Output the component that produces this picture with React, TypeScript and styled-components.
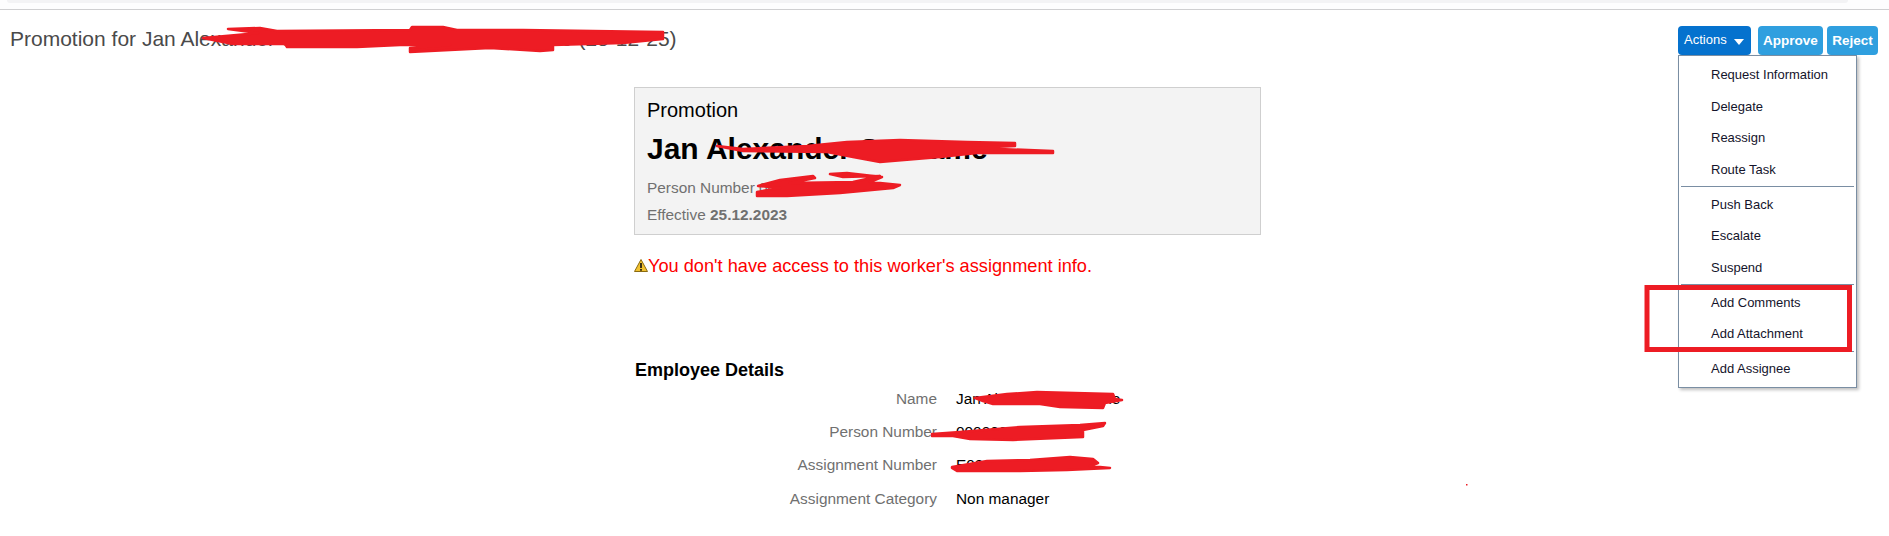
import React from "react";
import styled, { createGlobalStyle } from "styled-components";

const GlobalStyle = createGlobalStyle`
  html, body {
    margin: 0;
    padding: 0;
    background: #fff;
    overflow: hidden;
  }
  body {
    font-family: "Liberation Sans", Arial, sans-serif;
  }
`;

const Page = styled.div`
  position: relative;
  width: 1889px;
  height: 536px;
  overflow: hidden;
`;

const TopStrip = styled.div`
  height: 9px;
  padding: 0 41px 0 7px;
  background: #fdfdfe;
  border-bottom: 1px solid #cfcfd1;
`;

const TopStripInner = styled.div`
  height: 3px;
  background: #f3f3f5;
  border-radius: 0 0 4px 4px;
`;

const Header = styled.div`
  display: flex;
  justify-content: space-between;
  align-items: flex-start;
  padding: 16px 11px 0 10px;
  height: 29px;
`;

const PageTitle = styled.h1`
  margin: 0;
  font-size: 21px;
  font-weight: 400;
  line-height: 26px;
  color: #4a4a4a;
  white-space: nowrap;
`;

const ButtonBar = styled.div`
  position: relative;
  display: flex;
  width: 200px;
`;

const ActionsButton = styled.button`
  display: flex;
  align-items: center;
  width: 73px;
  height: 29px;
  margin-right: 7px;
  padding: 0 0 3px 6px;
  border: none;
  border-radius: 4px;
  background: #0572ce;
  color: #fff;
  font: 400 13px "Liberation Sans", Arial, sans-serif;
`;

const Caret = styled.span`
  width: 0;
  height: 0;
  margin: 5px 0 0 7px;
  border-left: 5px solid transparent;
  border-right: 5px solid transparent;
  border-top: 6px solid #fff;
`;

const FlatButton = styled.button<{ $width: number; $gap?: number }>`
  width: ${(p) => p.$width}px;
  height: 29px;
  margin-right: ${(p) => p.$gap ?? 0}px;
  padding: 0;
  border: none;
  border-radius: 4px;
  background: #2f9fdf;
  color: #fff;
  font: 700 13.5px "Liberation Sans", Arial, sans-serif;
`;

const Menu = styled.div`
  position: absolute;
  top: 29px;
  left: 0;
  box-sizing: border-box;
  width: 179px;
  height: 333px;
  padding: 3px 2px 0;
  background: #fff;
  border: 1px solid #7a8ea3;
  box-shadow: 2px 2px 3px rgba(0, 0, 0, 0.25);
`;

const MenuItem = styled.div`
  height: 31.5px;
  padding-left: 30px;
  font-size: 13px;
  line-height: 31.5px;
  color: #14142b;
  white-space: nowrap;
`;

const MenuSeparator = styled.div`
  height: 1px;
  margin: 1px 0 1.5px;
  background: #7a8ea3;
`;

const Main = styled.main`
  width: 627px;
  margin-left: 634px;
  padding-top: 32px;
`;

const SummaryCard = styled.section`
  box-sizing: border-box;
  height: 148px;
  padding: 7px 12px 0;
  background: #f3f3f3;
  border: 1px solid #cfcfcf;
`;

const CardType = styled.div`
  font-size: 20px;
  line-height: 30px;
  color: #000;
`;

const CardName = styled.div`
  margin-top: 4px;
  margin-bottom: 7px;
  font-size: 30px;
  font-weight: 700;
  line-height: 40px;
  color: #000;
  white-space: nowrap;
`;

const CardMeta = styled.div`
  margin-bottom: 3px;
  font-size: 15.4px;
  line-height: 24px;
  color: #707070;
  white-space: nowrap;
`;

const Warning = styled.div`
  display: flex;
  align-items: center;
  margin-top: 19px;
  font-size: 18.2px;
  line-height: 24px;
  color: #fd0000;
`;

const WarningIcon = styled.svg`
  width: 14px;
  height: 15px;
  margin-bottom: 2px;
  flex: none;
`;

const SectionHeading = styled.h2`
  margin: 80px 0 0 1px;
  font-size: 18px;
  font-weight: 700;
  line-height: 24px;
  color: #000;
`;

const DetailGrid = styled.dl`
  display: grid;
  grid-template-columns: 303px 1fr;
  grid-auto-rows: 33.3px;
  column-gap: 19px;
  margin: 0;
  font-size: 15.4px;
  align-items: center;
`;

const DetailLabel = styled.dt`
  text-align: right;
  color: #707070;
`;

const DetailValue = styled.dd`
  margin: 0;
  color: #000;
`;

const Annotations = styled.svg`
  position: absolute;
  top: 0;
  left: 0;
  pointer-events: none;
`;

const menuGroups = [
  ["Request Information", "Delegate", "Reassign", "Route Task"],
  ["Push Back", "Escalate", "Suspend"],
  ["Add Comments", "Add Attachment"],
  ["Add Assignee"],
];

const details = [
  ["Name", "Jan Alexander Surname"],
  ["Person Number", "00000000000000"],
  ["Assignment Number", "E00000000000000"],
  ["Assignment Category", "Non manager"],
];

const scribbles = [
  "M203 38 258 33 228 29 260 28 277 31 410 30 412 27 443 27 457 30 523 30 663 32 663 39 623 43 553 45 553 50 540 51 490 48 410 52 410 48 450 45 400 45 357 47 287 47 285 44 233 44Z",
  "M717 146 743 149 807 146 847 142 900 140 967 142 1015 143 1015 146 973 148 1053 151 1053 153 977 153 940 157 880 162 853 157 827 152 743 151Z",
  "M758 186 780 180 813 176 815 178 790 183 853 182 880 176 843 177 830 174 847 173 882 177 870 182 900 185 893 188 840 193 787 196 757 196 757 192 780 188Z",
  "M975 398 1007 394 1037 392 1113 394 1115 399 1122 400 1105 403 1103 408 1060 407 1040 404 993 404 983 401Z",
  "M932 434 960 432 1020 427 1080 425 1105 423 1103 426 1083 430 1083 437 1013 440 970 439 953 436 932 436Z",
  "M952 467 987 461 1030 460 1070 457 1093 459 1098 463 1090 466 1110 468 1067 470 1020 471 957 471 952 468Z",
];

const App: React.FC = () => {
  return (
    <Page>
      <GlobalStyle />
      <TopStrip>
        <TopStripInner />
      </TopStrip>
      <Header>
        <PageTitle>Promotion for Jan Alexander Surname 000 Promotion 00000 (25-12-25)</PageTitle>
        <ButtonBar>
          <ActionsButton>
            Actions
            <Caret />
          </ActionsButton>
          <FlatButton $width={65} $gap={4}>Approve</FlatButton>
          <FlatButton $width={51}>Reject</FlatButton>
          <Menu>
            {menuGroups.map((group, i) => (
              <React.Fragment key={group[0]}>
                {i > 0 && <MenuSeparator />}
                {group.map((item) => (
                  <MenuItem key={item}>{item}</MenuItem>
                ))}
              </React.Fragment>
            ))}
          </Menu>
        </ButtonBar>
      </Header>
      <Main>
        <SummaryCard>
          <CardType>Promotion</CardType>
          <CardName>Jan Alexander Surname</CardName>
          <CardMeta>Person Number 00000000000</CardMeta>
          <CardMeta>
            Effective <b>25.12.2023</b>
          </CardMeta>
        </SummaryCard>
        <Warning>
          <WarningIcon viewBox="0 0 14 15">
            <path d="M7 1.5 13.5 13.5H.5Z" fill="#f2c230" stroke="#8a6a10" strokeLinejoin="round" />
            <path d="M7 5v5M7 11v1.8" stroke="#111" strokeWidth="1.6" />
          </WarningIcon>
          You don't have access to this worker's assignment info.
        </Warning>
        <SectionHeading>Employee Details</SectionHeading>
        <DetailGrid>
          {details.map(([label, value]) => (
            <React.Fragment key={label}>
              <DetailLabel>{label}</DetailLabel>
              <DetailValue>{value}</DetailValue>
            </React.Fragment>
          ))}
        </DetailGrid>
      </Main>
      <Annotations width="1889" height="536" viewBox="0 0 1889 536">
        {scribbles.map((d) => (
          <path key={d} d={d} fill="#ed1c24" stroke="#ed1c24" strokeWidth="2.5" strokeLinejoin="round" />
        ))}
        <rect x="1647" y="287.5" width="202.5" height="62" fill="none" stroke="#ed1c24" strokeWidth="5" />
        <rect x="1466" y="484" width="1.5" height="1.5" fill="#ed1c24" />
      </Annotations>
    </Page>
  );
};

export default App;
